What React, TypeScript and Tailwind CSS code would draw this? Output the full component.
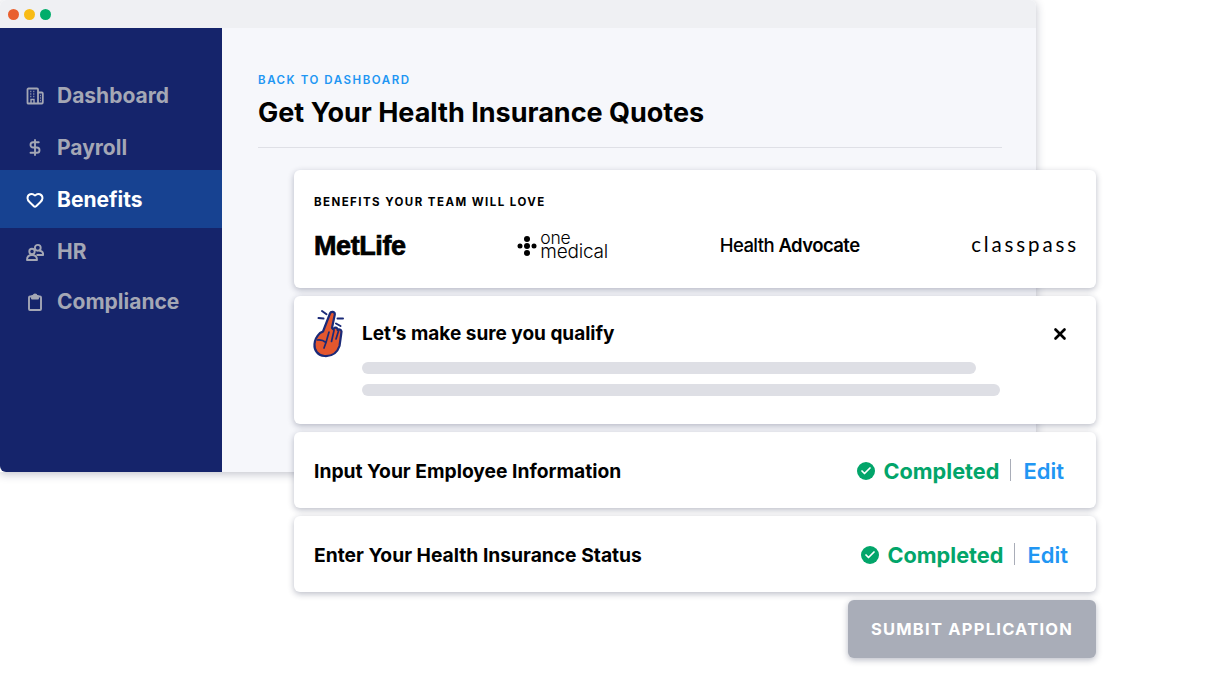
import {ReactNode} from "react";
import {Check, DollarSign, Heart, X} from "lucide-react";

const sans = "font-['Inter','Liberation_Sans',sans-serif]";

function BuildingIcon() {
  return (
    <svg width="18" height="18" viewBox="0 0 18 18" fill="none" stroke="currentColor" strokeWidth="1.8">
      <path d="M2 16.500h14a1 1 0 0 0 .8-1V6.500a1 1 0 0 0-1-1H12V2.500a1 1 0 0 0-1-1H2.500a1 1 0 0 0-1 1V16z" strokeLinejoin="round" />
      <path d="M12 5.500v11" />
      <path d="M5 16v-3.500h3V16" strokeWidth="1.400" />
      <path d="M4.300 4.500h1M7.300 4.500h1M4.300 7h1M7.300 7h1M4.300 9.500h1M7.300 9.500h1M14 8.500h.8M14 11h.8M14 13.500h.8" strokeWidth="1.500" />
    </svg>
  );
}

function PeopleIcon() {
  return (
    <svg width="19" height="19" viewBox="0 0 18 18" fill="none" stroke="currentColor" strokeWidth="1.900" strokeLinejoin="round">
      <circle cx="11.800" cy="4.300" r="2.900" />
      <circle cx="6" cy="8" r="2.700" />
      <path d="M1 16.500c0-3 2-5 5-5s5 2 5 5z" />
      <path d="M10.500 11.500h6.700c0-2.800-1.800-4.300-4-4.300" />
    </svg>
  );
}

function ClipboardIcon() {
  return (
    <svg width="18" height="18" viewBox="0 0 18 18" fill="none" stroke="currentColor" strokeWidth="1.900" strokeLinejoin="round">
      <path d="M5.500 3.500H4a1 1 0 0 0-1 1V16a1 1 0 0 0 1 1h10a1 1 0 0 0 1-1V4.500a1 1 0 0 0-1-1h-1.500" />
      <path d="M6 5.500V3h1.500a1.500 1.500 0 0 1 3 0H12v2.500z" fill="currentColor" />
    </svg>
  );
}

function FingersCrossed() {
  return (
    <svg width="34" height="50" viewBox="0 0 34 50">
      <path d="M18 5.500c1-2.500 5-2 4.800 1L20 20l1.500 1.500.5-1c1-1.500 3-1 3.500.5l.2 1c1-1 3.500-.5 3.800 1.500l-.3 2.500-1.700 12c-2 6-7 10.500-15 10C6 47.500 2 42.500 2.500 36c.3-4 2.500-8 5.500-11l3-1.500z" fill="#e4572e" stroke="#1b2a78" strokeWidth="2.200" strokeLinejoin="round" />
      <path d="M5.500 32c3-.5 6 .5 8.500 2.500l-2 5.500M14 34.500l3-10.500M19.500 33.500l2.500-11M24 31l2.500-8" fill="none" stroke="#1b2a78" strokeWidth="1.700" strokeLinecap="round" />
      <path d="M10 3l4.500 3.200M6.500 10l5 .6M25.500 10.500h5.500M24 15.500l4.500 2.500" stroke="#1b2a78" strokeWidth="2" strokeLinecap="round" />
    </svg>
  );
}

function NavItem({icon, label, active, className}: {icon: ReactNode; label: string; active?: boolean; className: string}) {
  return (
    <div className={`flex items-center gap-[13px] pl-[26px] text-[21px] font-bold ${active ? "bg-[#174291] text-white" : "text-[#a4a7b5]"} ${className}`}>
      <span className="flex w-[18px] justify-center">{icon}</span>
      <span>{label}</span>
    </div>
  );
}

function StatusRow({title, offset}: {title: string; offset: string}) {
  return (
    <div className={`flex h-[76px] items-center justify-between rounded-md bg-white pl-5 shadow-[0_2px_6px_rgba(30,35,70,0.3)] ${offset}`}>
      <span className="pt-0.5 text-[19.250px] font-bold text-black">{title}</span>
      <div className="flex items-center">
        <span className="ml-px mt-px flex h-[18px] w-[18px] items-center justify-center rounded-full bg-[#02a56a]">
          <Check size={12} strokeWidth={3.500} className="text-white" />
        </span>
        <span className="ml-2 pt-0.5 text-[21.700px] font-bold text-[#02a56a]">Completed</span>
        <span className="ml-[11px] h-[22px] w-px bg-[#a9adb8]" />
        <span className="ml-3 pt-0.5 text-[22px] font-semibold text-[#2196f3]">Edit</span>
      </div>
    </div>
  );
}

export default function App() {
  return (
    <div className={`h-[698px] w-[1216px] overflow-hidden bg-white ${sans}`}>
      <div className="h-[472px] w-[1036px] rounded-t-md shadow-[0_2px_10px_rgba(30,35,70,0.28)]">
        <div className="flex h-7 items-center gap-[5px] rounded-t-md bg-[#eff0f3] pl-2">
          <span className="h-[11px] w-[11px] rounded-full bg-[#e9602f]" />
          <span className="h-[11px] w-[11px] rounded-full bg-[#f8bb15]" />
          <span className="h-[11px] w-[11px] rounded-full bg-[#02ad6b]" />
        </div>
        <div className="flex h-[444px]">
          <div className="w-[222px] shrink-0 rounded-bl-md bg-[#15246b] pt-[41px]">
            <NavItem icon={<BuildingIcon />} label="Dashboard" className="h-[52px] pt-0.5" />
            <NavItem icon={<DollarSign size={19} strokeWidth={2.500} />} label="Payroll" className="h-[49px] pt-1" />
            <NavItem icon={<Heart size={20} strokeWidth={2.600} />} label="Benefits" active className="h-[58px] pt-0.5" />
            <NavItem icon={<PeopleIcon />} label="HR" className="h-[46px] pt-0.5" />
            <NavItem icon={<ClipboardIcon />} label="Compliance" className="h-[54px] pt-0.5" />
          </div>
          <div className="min-w-0 flex-1 bg-[#f6f7fb] pl-9 pr-[34px] pt-[45px]">
            <div className="text-[11.500px] font-semibold leading-[14px] tracking-[0.135em] text-[#2196f3]">BACK TO DASHBOARD</div>
            <h1 className="mt-[7px] text-[27px] font-bold leading-[38px] text-black">Get Your Health Insurance Quotes</h1>
            <div className="mt-[15px] h-px bg-[#dfe0e6]" />
            <div className="relative ml-9 mt-[22px] flex w-[802px] flex-col gap-2">
              <div className="h-[118px] rounded-md bg-white px-5 pt-6 shadow-[0_2px_6px_rgba(30,35,70,0.3)]">
                <div className="text-[11.500px] font-bold leading-[16px] tracking-[0.125em] text-black">BENEFITS YOUR TEAM WILL LOVE</div>
                <div className="mt-[21px] flex h-[30px] items-center justify-between">
                  <span className="font-['Liberation_Sans',sans-serif] text-[27px] font-bold tracking-[-0.015em] text-black [-webkit-text-stroke:0.7px_black]">MetLife</span>
                  <div className="flex items-center gap-[3px]">
                    <svg width="20" height="22" viewBox="0 0 20 22" fill="black">
                      <circle cx="10" cy="4" r="3" />
                      <circle cx="10" cy="18" r="3" />
                      <circle cx="10" cy="11" r="3" />
                      <circle cx="3" cy="11" r="2.500" />
                      <circle cx="17" cy="11" r="2.500" />
                    </svg>
                    <div className="-mt-1 text-[19px] font-light leading-[13px] tracking-[-0.01em] text-black">
                      <div className="text-[17.500px]">one</div>
                      <div className="mt-px">medical</div>
                    </div>
                  </div>
                  <span className="font-['Inter',sans-serif] text-[18.500px] font-medium tracking-[-0.03em] text-black">
                    Health <span className="font-semibold">Advocate</span>
                  </span>
                  <span className="-mr-[3px] -mt-1 font-['Lato',sans-serif] text-[20.500px] tracking-[0.14em] text-black">classpass</span>
                </div>
              </div>
              <div className="relative h-[128px] rounded-md bg-white pl-[68px] pr-24 pt-[26px] shadow-[0_2px_6px_rgba(30,35,70,0.3)]">
                <div className="absolute left-[18px] top-3">
                  <FingersCrossed />
                </div>
                <div className="text-[19px] font-bold leading-6 text-black">Let’s make sure you qualify</div>
                <X size={18} strokeWidth={3.500} className="absolute right-[27px] top-[29px] text-black" />
                <div className="mt-4 h-3 w-[614px] rounded-md bg-[#dedfe5]" />
                <div className="mt-2.5 h-3 w-[638px] rounded-md bg-[#dedfe5]" />
              </div>
              <StatusRow title="Input Your Employee Information" offset="pr-8" />
              <StatusRow title="Enter Your Health Insurance Status" offset="pr-7" />
              <div className="flex justify-end">
                <div className="flex h-[58px] w-[248px] items-center justify-center rounded-md bg-[#a9adb8] text-[16.500px] font-bold tracking-[0.075em] text-white shadow-[0_2px_6px_rgba(30,35,70,0.3)]">
                  SUMBIT APPLICATION
                </div>
              </div>
            </div>
          </div>
        </div>
      </div>
    </div>
  );
}
